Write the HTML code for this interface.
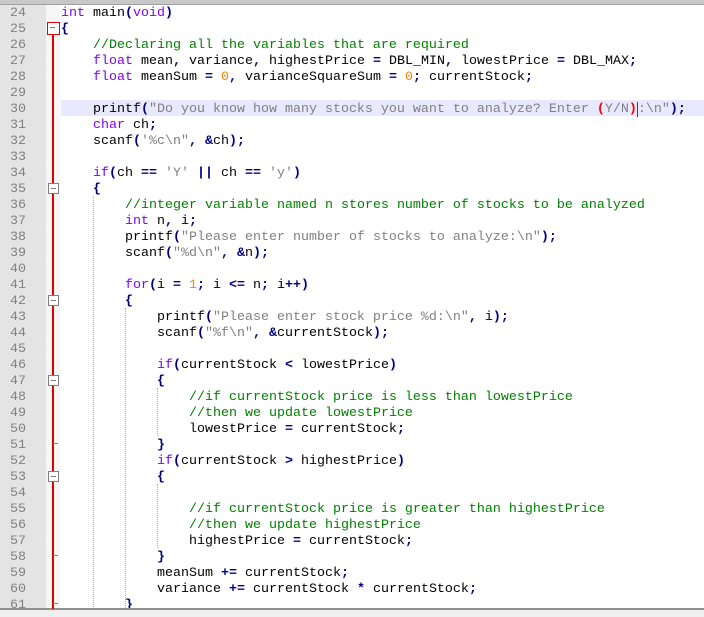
<!DOCTYPE html><html><head><style>
body{margin:0;width:704px;height:615px;overflow:hidden;background:#fff;position:relative;font-family:"Liberation Mono",monospace;font-size:13.33px}
#top{position:absolute;left:0;top:0;width:704px;height:4px;background:#c8c8c8;border-bottom:1px solid #a0a0a0}
#gut{position:absolute;left:0;top:5px;width:46px;height:604px;background:#e4e4e4}
#fold{position:absolute;left:46px;top:5px;width:14px;height:604px;background:repeating-linear-gradient(45deg,#f3f3f3 0 1px,#fafafa 1px 2px)}
#bot{position:absolute;left:0;top:608px;width:704px;height:7px;background:#f0f0f0;border-top:2px solid #909090}
.n{position:absolute;left:0;width:26px;text-align:right;color:#808080;height:16px;line-height:16px}
.l{position:absolute;left:61px;height:16px;line-height:16px;white-space:pre;color:#000}
.k{color:#8000ff}.c{color:#008000}.s{color:#808080}.d{color:#ff8000}.o{color:#000080;font-weight:bold}
.g{position:absolute;width:0;border-left:1px dotted #b0b0b0}
.bx{position:absolute;left:48px;width:9px;height:9px;border:1px solid #808080;background:#fff;z-index:3}
.bx:after{content:"";position:absolute;left:2px;top:4px;width:5px;height:1px;background:#808080}
.tk{position:absolute;left:53px;width:5px;height:1px;background:#808080;z-index:3}
</style></head><body>
<div id="top"></div><div id="gut"></div><div id="fold"></div>
<div style="position:absolute;left:61px;top:100px;width:643px;height:16px;background:#e8e8ff"></div>
<div style="position:absolute;left:52px;top:33px;width:2px;height:576px;background:#e00000;z-index:2"></div>
<div class="bx" style="top:22px;left:47px;width:11px;height:11px;border-color:#e00000"></div>
<div class="bx" style="top:183px"></div><div class="bx" style="top:295px"></div>
<div class="bx" style="top:375px"></div><div class="bx" style="top:471px"></div>
<div class="tk" style="top:443px"></div><div class="tk" style="top:555px"></div><div class="tk" style="top:603px"></div>
<div class="g" style="left:93px;top:196px;height:413px"></div>
<div class="g" style="left:125px;top:308px;height:300px"></div>
<div class="g" style="left:157px;top:388px;height:48px"></div>
<div class="g" style="left:157px;top:484px;height:64px"></div>
<div id="c"></div>
<script>
var L=[
'<span class=k>int</span> main<span class=o>(</span><span class=k>void</span><span class=o>)</span>',
'<span class=o>{</span>',
'    <span class=c>//Declaring all the variables that are required</span>',
'    <span class=k>float</span> mean<span class=o>,</span> variance<span class=o>,</span> highestPrice <span class=o>=</span> DBL_MIN<span class=o>,</span> lowestPrice <span class=o>=</span> DBL_MAX<span class=o>;</span>',
'    <span class=k>float</span> meanSum <span class=o>=</span> <span class=d>0</span><span class=o>,</span> varianceSquareSum <span class=o>=</span> <span class=d>0</span><span class=o>;</span> currentStock<span class=o>;</span>',
'',
'    printf<span class=o>(</span><span class=s>"Do you know how many stocks you want to analyze? Enter </span><span style="color:red;font-weight:bold">(</span><span class=s>Y/N</span><span style="color:red;font-weight:bold">)</span><span style="border-left:1px solid #8000ff" class=s>:\\n"</span><span class=o>);</span>',
'    <span class=k>char</span> ch<span class=o>;</span>',
'    scanf<span class=o>(</span><span class=s>\'%c\\n"</span><span class=o>,</span> <span class=o>&amp;</span>ch<span class=o>);</span>',
'',
'    <span class=k>if</span><span class=o>(</span>ch <span class=o>==</span> <span class=s>\'Y\'</span> <span class=o>||</span> ch <span class=o>==</span> <span class=s>\'y\'</span><span class=o>)</span>',
'    <span class=o>{</span>',
'        <span class=c>//integer variable named n stores number of stocks to be analyzed</span>',
'        <span class=k>int</span> n<span class=o>,</span> i<span class=o>;</span>',
'        printf<span class=o>(</span><span class=s>"Please enter number of stocks to analyze:\\n"</span><span class=o>);</span>',
'        scanf<span class=o>(</span><span class=s>"%d\\n"</span><span class=o>,</span> <span class=o>&amp;</span>n<span class=o>);</span>',
'',
'        <span class=k>for</span><span class=o>(</span>i <span class=o>=</span> <span class=d>1</span><span class=o>;</span> i <span class=o>&lt;=</span> n<span class=o>;</span> i<span class=o>++)</span>',
'        <span class=o>{</span>',
'            printf<span class=o>(</span><span class=s>"Please enter stock price %d:\\n"</span><span class=o>,</span> i<span class=o>);</span>',
'            scanf<span class=o>(</span><span class=s>"%f\\n"</span><span class=o>,</span> <span class=o>&amp;</span>currentStock<span class=o>);</span>',
'',
'            <span class=k>if</span><span class=o>(</span>currentStock <span class=o>&lt;</span> lowestPrice<span class=o>)</span>',
'            <span class=o>{</span>',
'                <span class=c>//if currentStock price is less than lowestPrice</span>',
'                <span class=c>//then we update lowestPrice</span>',
'                lowestPrice <span class=o>=</span> currentStock<span class=o>;</span>',
'            <span class=o>}</span>',
'            <span class=k>if</span><span class=o>(</span>currentStock <span class=o>&gt;</span> highestPrice<span class=o>)</span>',
'            <span class=o>{</span>',
'',
'                <span class=c>//if currentStock price is greater than highestPrice</span>',
'                <span class=c>//then we update highestPrice</span>',
'                highestPrice <span class=o>=</span> currentStock<span class=o>;</span>',
'            <span class=o>}</span>',
'            meanSum <span class=o>+=</span> currentStock<span class=o>;</span>',
'            variance <span class=o>+=</span> currentStock <span class=o>*</span> currentStock<span class=o>;</span>',
'        <span class=o>}</span>'];
var h='';for(var i=0;i<L.length;i++){var t=6+i*16;h+='<div class=n style="top:'+t+'px">'+(24+i)+'</div><div class=l style="top:'+t+'px">'+L[i]+'</div>';}
document.getElementById('c').innerHTML=h;
</script>
<div id="bot"></div>
</body></html>
